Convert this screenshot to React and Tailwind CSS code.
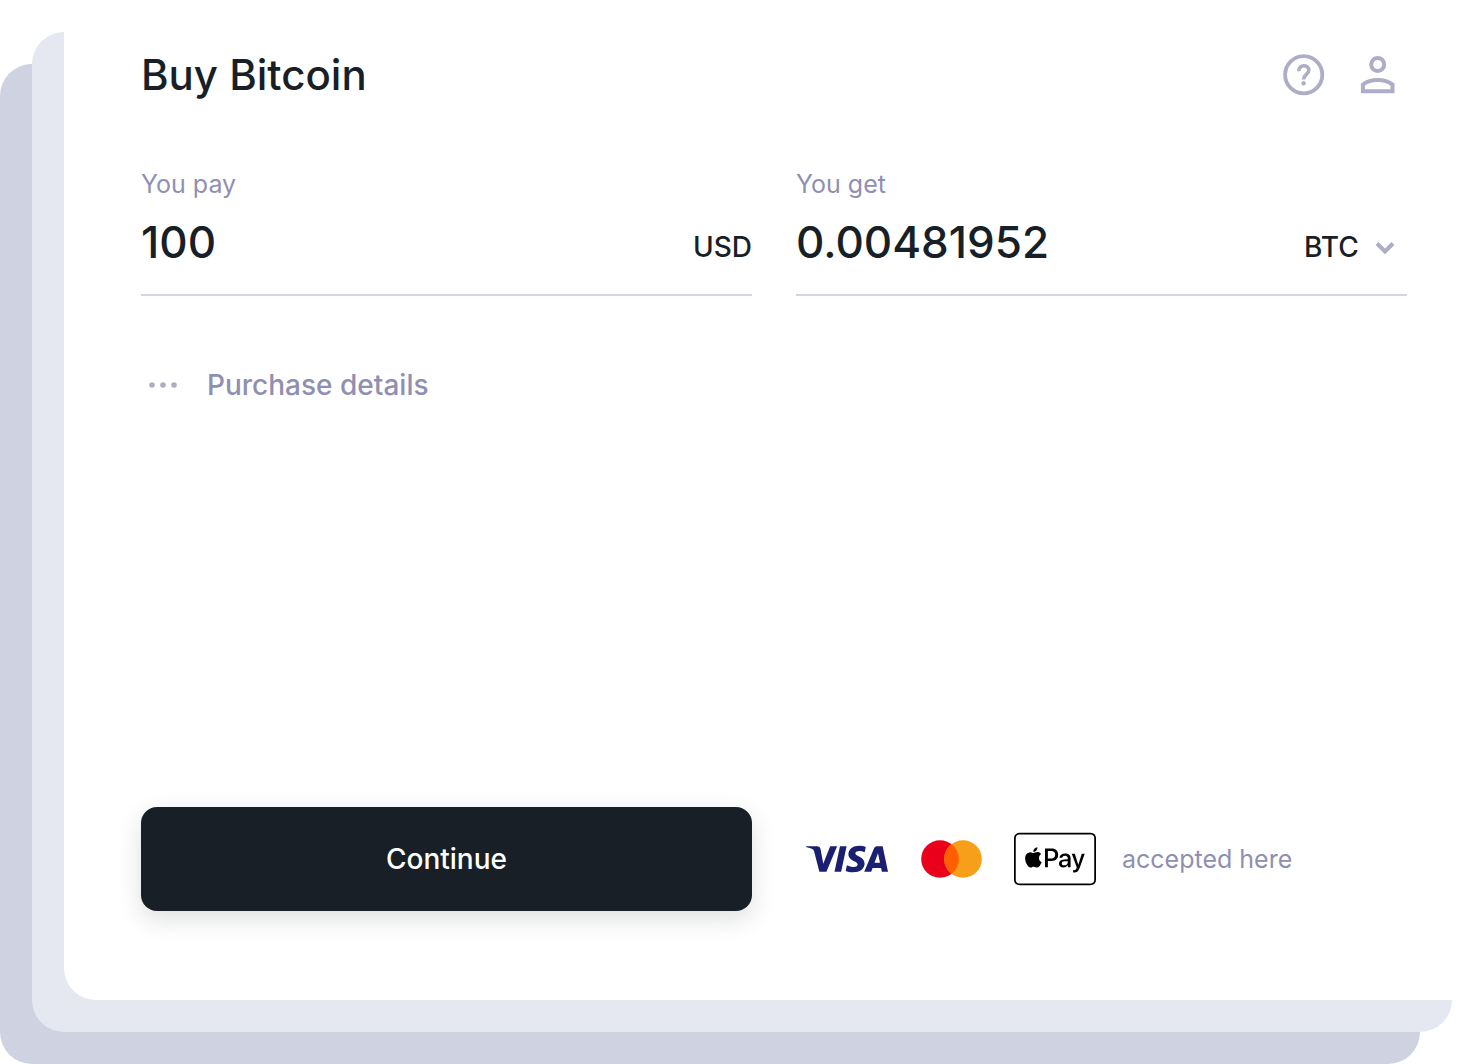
import { useState } from "react";
import { SiApplepay, SiVisa } from "react-icons/si";

const RATE = 20748.95;

const HelpIcon = () => (
  <svg viewBox="0 0 50 50" className="size-[50px]" fill="none" stroke="currentColor" strokeWidth="3.8" aria-hidden="true">
    <circle cx="24.7" cy="24.7" r="18.6" />
    <path d="M19.8 21.2 C19.8 13.9 29.8 14.2 29.8 20.2 C29.8 24.4 24.6 24.4 24.6 29.4" strokeWidth="3.6" />
    <circle cx="24.6" cy="33.2" r="2.2" fill="currentColor" stroke="none" />
  </svg>
);

const UserIcon = () => (
  <svg viewBox="0 0 50 50" className="size-[50px]" fill="none" stroke="currentColor" strokeWidth="4" aria-hidden="true">
    <circle cx="24.7" cy="14.5" r="6.5" />
    <path d="M9.9 41.2 V34.6 C17.7 28.6 31.7 28.6 39.5 34.6 V41.2 Z" />
  </svg>
);

const MastercardLogo = () => (
  <svg viewBox="0 0 61 38" className="w-[61px] h-[38px]" role="img" aria-label="Mastercard">
    <circle cx="19" cy="19" r="18.8" fill="#eb001b" />
    <circle cx="42" cy="19" r="18.8" fill="#f79e1b" />
    <path d="M30.5 4.1 A18.8 18.8 0 0 1 30.5 33.9 A18.8 18.8 0 0 1 30.5 4.1 Z" fill="#ff5f00" />
  </svg>
);

/**
 * Labelled amount box with its currency on the right.
 */
const AmountField = ({ id, label, value, onChange, children }) => (
  <div className="border-b-2 border-[#d5d5e0]">
    <label htmlFor={id} className="block text-[25px] leading-8 text-[#8f8fb2]">
      {label}
    </label>
    <div className="flex items-center h-[94px] pb-[10px]">
      <input
        id={id}
        type="text"
        inputMode="decimal"
        value={value}
        onChange={({ target }) => onChange(target.value)}
        className="min-w-0 flex-1 text-[44px] leading-[56px] font-medium outline-none"
      />
      {children}
    </div>
  </div>
);

const App = () => {
  const [pay, setPay] = useState("100");
  const [get, setGet] = useState("0.00481952");
  const [currency, setCurrency] = useState("BTC");

  const handlePay = (value) => {
    setPay(value);
    setGet((Number(value) / RATE || 0).toFixed(8));
  };

  return (
    <div className="min-h-screen flex pl-16 pb-16 bg-white font-['Inter',sans-serif] text-[#181f26]">
      <main className="flex-1 flex flex-col bg-white rounded-[32px] px-[77px] pt-[49px] pb-[89px] shadow-[-32px_32px_0_#e5e8f0,-64px_64px_0_#cfd2e1]">
        <header className="flex items-center justify-between">
          <h1 className="text-[42px] leading-[52px] font-medium">Buy Bitcoin</h1>
          <div className="flex gap-6 pr-1 text-[#adadc7]">
            <button type="button" aria-label="Help">
              <HelpIcon />
            </button>
            <button type="button" aria-label="Account">
              <UserIcon />
            </button>
          </div>
        </header>

        <form className="flex-1 flex flex-col pt-[67px]" onSubmit={(e) => e.preventDefault()}>
          <div className="grid grid-cols-2 gap-11">
            <AmountField id="pay" label="You pay" value={pay} onChange={handlePay}>
              <span className="pt-[10px] text-[28px] leading-9 font-medium">USD</span>
            </AmountField>
            <AmountField id="get" label="You get" value={get} onChange={setGet}>
              <div className="flex items-center gap-4 pt-[10px] pr-3">
                <select
                  aria-label="Currency"
                  value={currency}
                  onChange={({ target }) => setCurrency(target.value)}
                  className="appearance-none text-[28px] leading-9 font-medium outline-none"
                >
                  <option>BTC</option>
                </select>
                <svg viewBox="0 0 20 14" className="w-5 h-[14px]" fill="none" stroke="#adadc7" strokeWidth="4" aria-hidden="true">
                  <path d="M2 3.5 L10 11.5 L18 3.5" />
                </svg>
              </div>
            </AmountField>
          </div>

          <button type="button" className="flex items-center gap-[30px] self-start mt-[69px] pl-2 text-[#8f8fb2]">
            <svg viewBox="0 0 28 6" className="w-7 h-[6px]" fill="#adadc7" aria-hidden="true">
              <circle cx="3" cy="3" r="2.8" />
              <circle cx="14" cy="3" r="2.8" />
              <circle cx="25" cy="3" r="2.8" />
            </svg>
            <span className="text-[28px] leading-10 font-medium">Purchase details</span>
          </button>

          <div className="grid grid-cols-2 gap-11 mt-auto items-center">
            <button
              type="submit"
              className="h-[104px] rounded-2xl bg-[#181f26] text-[28px] font-medium text-white shadow-[0_8px_24px_rgba(24,31,38,0.14)]"
            >
              Continue
            </button>
            <div className="flex items-center pl-[10px]">
              <SiVisa className="size-[82px] text-[#1a1f71]" title="Visa" />
              <div className="pl-[33px] pr-8">
                <MastercardLogo />
              </div>
              <SiApplepay className="size-[82px] text-black" title="Apple Pay" />
              <span className="pl-[26px] text-[25px] leading-8 text-[#8f8fb2]">accepted here</span>
            </div>
          </div>
        </form>
      </main>
    </div>
  );
};

export default App;
